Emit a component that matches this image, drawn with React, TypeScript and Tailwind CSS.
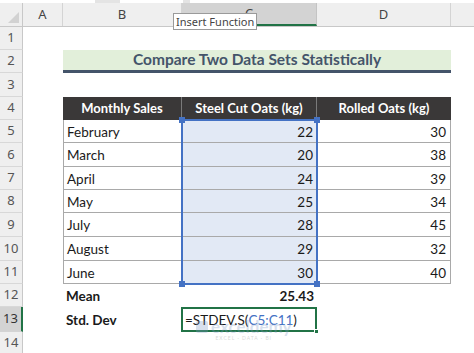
import React from 'react'

type Row = {
  n: number
  h: string
  b?: string
  c?: string
  d?: string
}

const dataRows: Row[] = [
  { n: 5, h: 'h-[23px]', b: 'February', c: '22', d: '30' },
  { n: 6, h: 'h-[24px]', b: 'March', c: '20', d: '38' },
  { n: 7, h: 'h-[23px]', b: 'April', c: '24', d: '39' },
  { n: 8, h: 'h-[23px]', b: 'May', c: '25', d: '34' },
  { n: 9, h: 'h-[24px]', b: 'July', c: '28', d: '45' },
  { n: 10, h: 'h-[24px]', b: 'August', c: '29', d: '32' },
  { n: 11, h: 'h-[23px]', b: 'June', c: '30', d: '40' },
]

function RowHead({ n, active }: { n: number; active?: boolean }) {
  return (
    <div
      className={
        active
          ? 'w-[23px] shrink-0 flex items-center justify-center bg-[#d3d3d3] border-r-2 border-r-[#217346] border-b border-b-[#d4d4d4] text-[13px] text-[#333]'
          : 'w-[23px] shrink-0 flex items-center justify-center bg-[#efefef] border-r border-r-[#c8c8c8] border-b border-b-[#d8d8d8] text-[13px] text-[#555]'
      }
      style={{ fontFamily: '"Noto Sans", sans-serif' }}
    >
      {n}
    </div>
  )
}

export default function App() {
  return (
    <div className="relative w-[474px] h-[353px] overflow-hidden bg-white text-[#1a1a1a]" style={{ fontFamily: 'Lato, "Noto Sans", sans-serif' }}>
      {/* formula bar remnant */}
      <div className="flex h-[3px] bg-[#e4e4e4]">
        <div className="w-[95px] bg-white" />
        <div className="w-[25px]" />
        <div className="w-[63px] bg-white" />
        <div className="w-[7px]" />
        <div className="flex-1 bg-white" />
      </div>

      {/* column headers */}
      <div className="flex h-[24px] border-b border-[#c8c8c8] text-[13px] text-[#444]" style={{ fontFamily: '"Noto Sans", sans-serif' }}>
        <div className="relative w-[23px] shrink-0 bg-[#efefef] border-r border-[#c8c8c8]">
          <div className="absolute right-[3px] bottom-[3px] w-0 h-0 border-l-[11px] border-l-transparent border-b-[11px] border-b-[#d2d2d2]" />
        </div>
        <div className="w-[40px] shrink-0 flex items-center justify-center bg-[#efefef] border-r border-[#d4d4d4]">A</div>
        <div className="w-[119px] shrink-0 flex items-center justify-center bg-[#efefef] border-r border-[#d4d4d4]">B</div>
        <div className="w-[135px] shrink-0 flex items-center justify-center bg-[#d3d3d3] border-r border-[#c4c4c4] border-b-2 border-b-[#217346]">C</div>
        <div className="w-[134px] shrink-0 flex items-center justify-center bg-[#efefef] border-r border-[#d4d4d4]">D</div>
        <div className="flex-1 bg-[#efefef]" />
      </div>

      {/* row 1 */}
      <div className="flex h-[23px]">
        <RowHead n={1} />
      </div>

      {/* row 2: title */}
      <div className="flex h-[23px]">
        <RowHead n={2} />
        <div className="w-[40px] shrink-0" />
        <div className="w-[388px] shrink-0 flex items-center justify-center bg-[#e2efda] border-b-[3px] border-[#44546a] text-[15.5px] font-bold text-[#44546a]">
          Compare Two Data Sets Statistically
        </div>
      </div>

      {/* row 3 */}
      <div className="flex h-[24px]">
        <RowHead n={3} />
      </div>

      {/* row 4: table header */}
      <div className="flex h-[23px]">
        <RowHead n={4} />
        <div className="w-[40px] shrink-0" />
        <div className="w-[119px] shrink-0 flex items-center justify-center bg-[#3a3838] border-r border-[#7a7a7a] text-[13px] font-bold text-white">
          Monthly Sales
        </div>
        <div className="w-[135px] shrink-0 flex items-center justify-center bg-[#3a3838] border-r border-[#7a7a7a] text-[13px] font-bold text-white">
          Steel Cut Oats (kg)
        </div>
        <div className="w-[134px] shrink-0 flex items-center justify-center bg-[#3a3838] text-[13px] font-bold text-white">
          Rolled Oats (kg)
        </div>
      </div>

      {/* rows 5-11: data */}
      {dataRows.map((r) => (
        <div key={r.n} className={`flex ${r.h}`}>
          <RowHead n={r.n} />
          <div className="w-[40px] shrink-0" />
          <div className="w-[119px] shrink-0 flex items-center pl-[3px] pt-[2px] border-l border-b border-r border-[#a9a9a9] text-[13.5px]">
            {r.b}
          </div>
          <div className="w-[135px] shrink-0 flex items-center justify-end pr-[3px] pt-[2px] bg-[#e2e9f5] border-b border-r border-[#a9a9a9] text-[13.5px]">
            {r.c}
          </div>
          <div className="w-[134px] shrink-0 flex items-center justify-end pr-[4px] pt-[2px] border-b border-r border-[#a9a9a9] text-[13.5px]">
            {r.d}
          </div>
        </div>
      ))}

      {/* row 12 */}
      <div className="flex h-[23px]">
        <RowHead n={12} />
        <div className="w-[40px] shrink-0" />
        <div className="w-[119px] shrink-0 flex items-center pl-[3px] pt-[2px] text-[13.5px] font-bold">Mean</div>
        <div className="w-[135px] shrink-0 flex items-center justify-end pr-[3px] pt-[2px] text-[13.5px] font-bold">25.43</div>
      </div>

      {/* row 13 */}
      <div className="flex h-[25px]">
        <RowHead n={13} active />
        <div className="w-[40px] shrink-0" />
        <div className="w-[119px] shrink-0 flex items-center pl-[3px] pt-[2px] text-[13.5px] font-bold">Std. Dev</div>
        <div className="relative w-[136px] -ml-px shrink-0 flex items-center pl-[2px] pt-[1px] border-2 border-[#217346] text-[13.5px] whitespace-nowrap">
          <span>=STDEV.S(</span>
          <span className="text-[#4472c4]">C5:C11</span>
          <span>)</span>
          <div className="absolute -right-[4px] -bottom-[4px] w-[5px] h-[5px] bg-[#217346] border border-white" />
        </div>
      </div>

      {/* row 14 */}
      <div className="flex h-[23px]">
        <RowHead n={14} />
      </div>

      {/* range highlight C5:C11 */}
      <div className="absolute left-[181px] top-[119px] w-[137px] h-[166px] border-2 border-[#4472c4] pointer-events-none">
        <div className="absolute -left-[4px] -top-[4px] w-[6px] h-[6px] bg-[#4472c4]" />
        <div className="absolute -right-[4px] -top-[4px] w-[6px] h-[6px] bg-[#4472c4]" />
        <div className="absolute -left-[4px] -bottom-[4px] w-[6px] h-[6px] bg-[#4472c4]" />
        <div className="absolute -right-[4px] -bottom-[4px] w-[6px] h-[6px] bg-[#4472c4]" />
      </div>

      {/* tooltip */}
      <div
        className="absolute left-[173px] top-[13px] h-[17px] px-[2px] flex items-center bg-white border border-[#9a9a9a] text-[11px] text-[#444] leading-none"
        style={{ fontFamily: '"Noto Sans", sans-serif' }}
      >
        Insert Function
      </div>

      {/* watermark */}
      <div className="absolute left-[196px] top-[318px] flex flex-col items-center opacity-30 pointer-events-none">
        <div className="flex items-center gap-[3px]">
          <div className="w-[12px] h-[12px] rounded-[2px] bg-[#7f9bc7]" />
          <span className="text-[17px] font-bold text-[#7f9bc7] leading-none">exceldemy</span>
        </div>
        <span className="text-[5px] tracking-[1px] text-[#7f7f7f] leading-none mt-[1px]">EXCEL · DATA · BI</span>
      </div>
    </div>
  )
}
